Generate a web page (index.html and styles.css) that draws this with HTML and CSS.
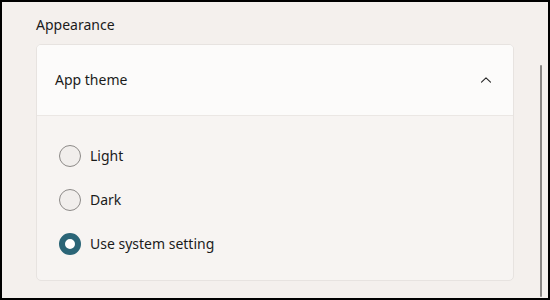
FILE: index.html
```html
<!DOCTYPE html>
<html>
<head>
<meta charset="utf-8">
<link rel="stylesheet" href="styles.css">
</head>
<body>
<div class="frame">
  <div class="main">
    <div class="section-title">Appearance</div>
    <div class="card">
      <div class="card-header">
        <span class="header-label">App theme</span>
        <svg class="chevron" width="12" height="8" viewBox="0 0 12 8"><path d="M1.5 6.2 L6 1.8 L10.5 6.2" fill="none" stroke="#262626" stroke-width="1.1" stroke-linecap="round" stroke-linejoin="round"/></svg>
      </div>
      <div class="card-body">
        <label class="option"><span class="radio"></span><span class="option-label">Light</span></label>
        <label class="option"><span class="radio"></span><span class="option-label">Dark</span></label>
        <label class="option"><span class="radio checked"></span><span class="option-label">Use system setting</span></label>
      </div>
    </div>
  </div>
  <div class="scroll-track"><div class="scroll-thumb"></div></div>
</div>
</body>
</html>
```
FILE: styles.css
```css
html, body {
  margin: 0;
  padding: 0;
  background: #000;
  width: 550px;
  height: 300px;
  overflow: hidden;
}
.frame {
  margin: 2px 2px 2px 2px;
  width: 546px;
  height: 296px;
  background: #f4f0ed;
  display: flex;
  font-family: "Noto Sans", "Open Sans", sans-serif;
  color: #1b1b1b;
}
.main {
  flex: 1;
  padding: 13px 0 0 34px;
  display: flex;
  flex-direction: column;
}
.section-title {
  font-size: 14px;
  line-height: 20px;
  height: 20px;
  margin-bottom: 9px;
}
.card {
  width: 476px;
  border: 1px solid #e7e3e0;
  border-radius: 5px;
  background: #f7f4f2;
  overflow: hidden;
}
.card-header {
  height: 70px;
  background: #fcfbfa;
  border-bottom: 1px solid #ebe7e4;
  display: flex;
  align-items: center;
  justify-content: space-between;
  padding: 0 21px 0 18px;
}
.header-label {
  font-size: 14px;
  line-height: 20px;
}
.chevron {
  display: block;
}
.card-body {
  padding: 18px 0 14px 22px;
  display: flex;
  flex-direction: column;
}
.option {
  height: 44px;
  display: flex;
  align-items: center;
  gap: 9px;
}
.radio {
  width: 20px;
  height: 20px;
  border-radius: 50%;
  border: 1px solid #8d8a88;
  background: #f1eeec;
  box-sizing: content-box;
  flex: none;
}
.radio.checked {
  width: 10px;
  height: 10px;
  border: 6px solid #2b6577;
  background: #ffffff;
}
.option-label {
  font-size: 14px;
  line-height: 20px;
}
.scroll-track {
  width: 8px;
  flex: none;
  padding-top: 63px;
  display: flex;
  justify-content: flex-start;
}
.scroll-thumb {
  width: 2px;
  height: 232px;
  background: #8a8785;
  border-radius: 1px;
}
```
